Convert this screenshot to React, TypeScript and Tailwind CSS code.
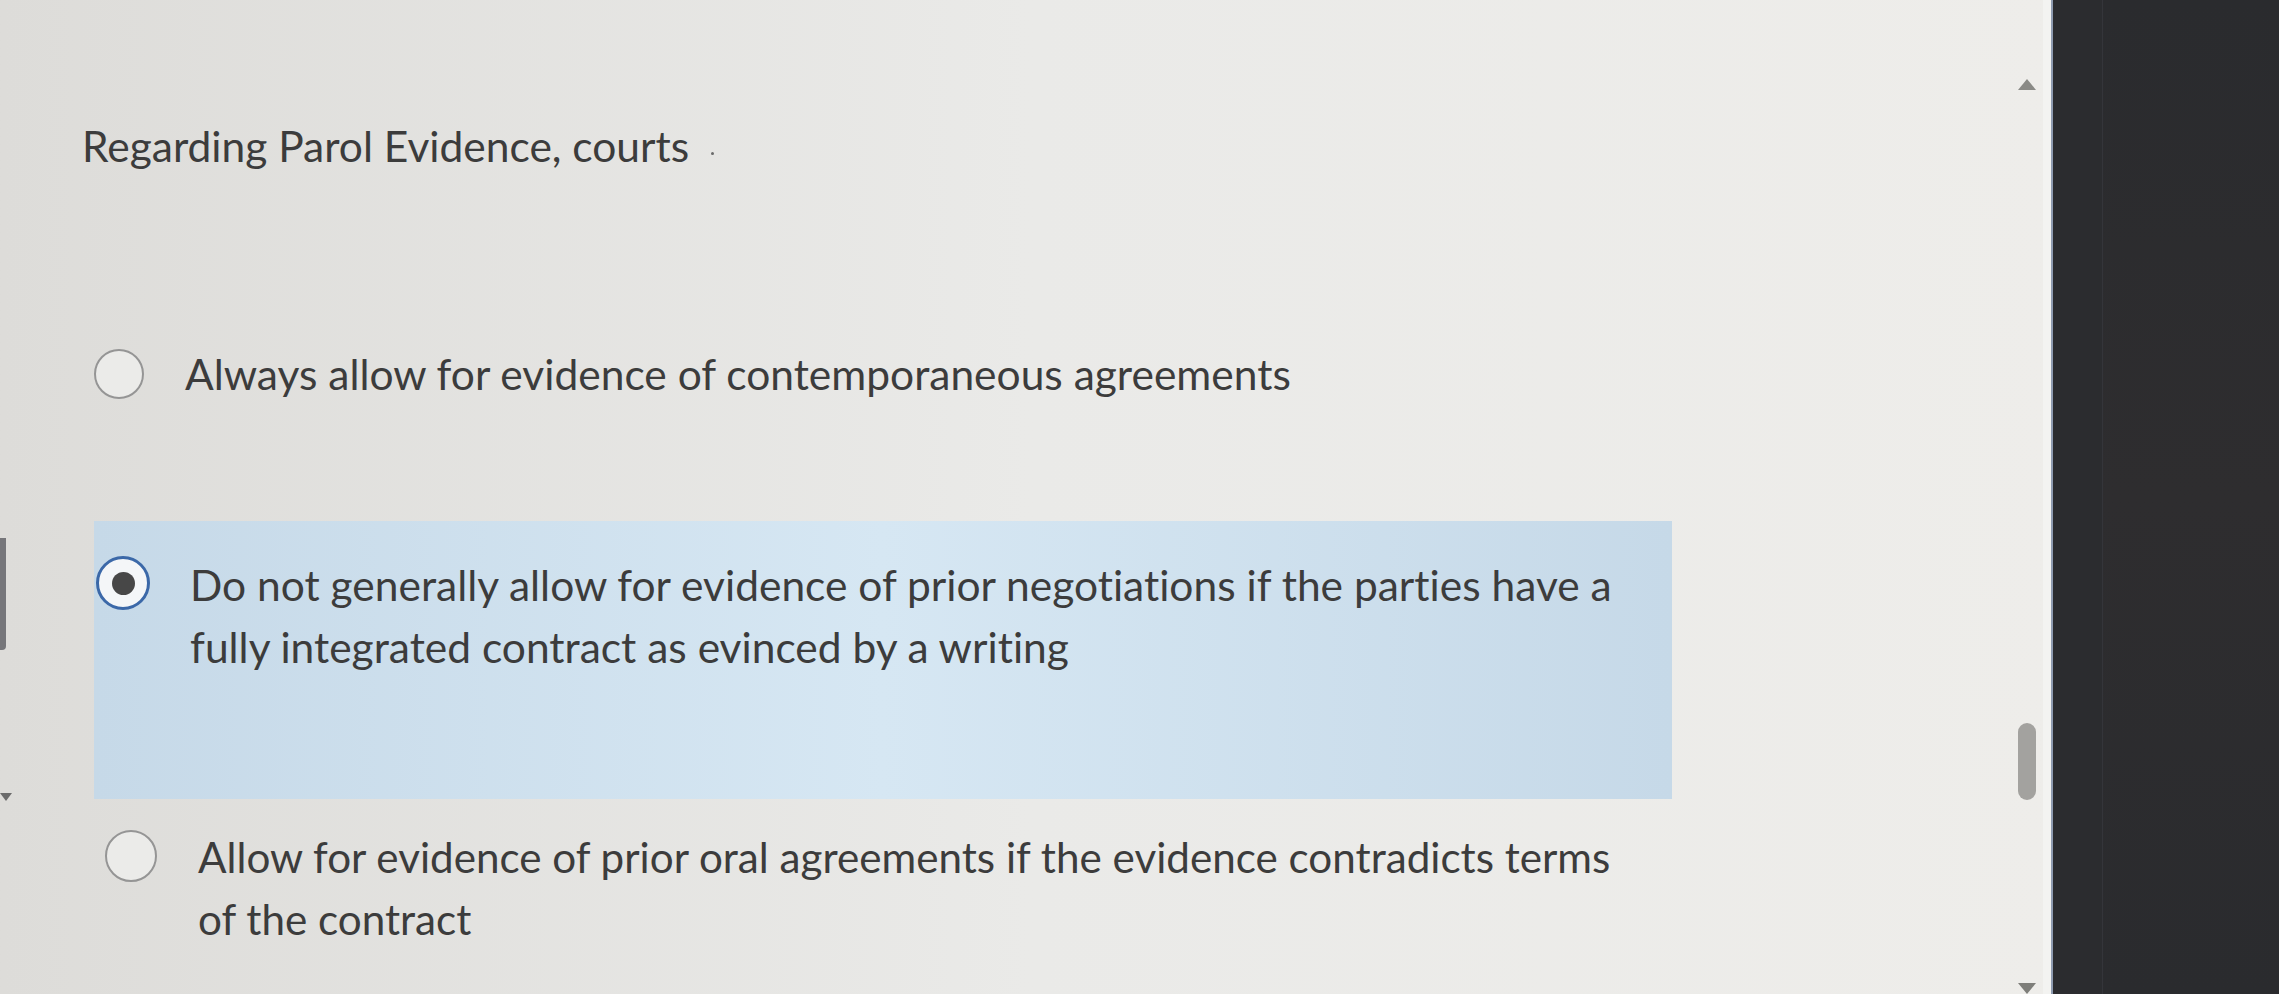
import React from "react";

const font = {
  fontFamily: "Lato, 'Open Sans', 'Liberation Sans', sans-serif",
  fontVariantLigatures: "none" as const,
};

function Radio({ size, selected }: { size: number; selected?: boolean }) {
  if (selected) {
    return (
      <div
        className="shrink-0 rounded-full border-[3px] border-[#3b68a8] bg-[#f4f6f8] flex items-center justify-center"
        style={{ width: size, height: size }}
      >
        <div className="w-[23px] h-[23px] rounded-full bg-[#474747]" />
      </div>
    );
  }
  return (
    <div
      className="shrink-0 rounded-full border-[2px] border-[#959595] bg-[#ebebe9]"
      style={{ width: size, height: size }}
    />
  );
}

export default function App() {
  return (
    <div className="w-[2279px] h-[994px] overflow-hidden flex" style={font}>
      {/* main content */}
      <div className="relative flex-1 flex bg-linear-to-r from-[#dddcd9] via-[#eaeae8] to-[#eeedea]">
        <div className="absolute left-0 top-[538px] w-[6px] h-[112px] rounded-br-[4px] bg-[#76767a]" />
        <div className="absolute left-0 top-[793px] w-0 h-0 border-l-[6px] border-r-[6px] border-t-[8px] border-l-transparent border-r-transparent border-t-[#6b6b6b]" />

        <div className="flex-1 flex flex-col pt-[121px] text-[#3c3c3c]">
          <div className="pl-[82px] text-[42.5px] leading-[50px] flex items-center">
            <span>Regarding Parol Evidence, courts</span>
            <span className="ml-[22px] mt-[14px] w-[3px] h-[3px] rounded-full bg-[#6a6a6a]" />
          </div>

          <div className="ml-[94px] w-[1578px] flex flex-col mt-[172px]">
            {/* option 1 */}
            <div className="flex items-start">
              <div className="mt-[6px]">
                <Radio size={50} />
              </div>
              <div className="ml-[41px] text-[42.5px] leading-[62px]">
                Always allow for evidence of contemporaneous agreements
              </div>
            </div>

            {/* option 2 selected */}
            <div className="mt-[116px] flex items-start pl-[2px] pt-[33px] pb-[121px] bg-linear-to-r from-[#c6d9e8] via-[#d6e7f3] to-[#c6d9e8]">
              <div className="mt-[2px]">
                <Radio size={54} selected />
              </div>
              <div className="ml-[40px] w-[1470px] text-[42.5px] leading-[62px]">
                Do not generally allow for evidence of prior negotiations if the parties have a fully integrated contract as evinced by a writing
              </div>
            </div>

            {/* option 3 */}
            <div className="mt-[27px] flex items-start pl-[11px]">
              <div className="mt-[4px]">
                <Radio size={52} />
              </div>
              <div className="ml-[41px] w-[1445px] text-[42.2px] leading-[62px]">
                Allow for evidence of prior oral agreements if the evidence contradicts terms of the contract
              </div>
            </div>
          </div>
        </div>

        {/* scrollbar track */}
        <div className="w-[43px] flex flex-col pl-[18px] pt-[79px]">
          <div className="w-0 h-0 border-l-[9px] border-r-[9px] border-b-[11px] border-l-transparent border-r-transparent border-b-[#8a8a86]" />
          <div className="mt-[633px] w-[18px] h-[79px] rounded-full bg-[#a3a29f]" />
          <div className="mt-[183px] w-0 h-0 border-l-[9px] border-r-[9px] border-t-[11px] border-l-transparent border-r-transparent border-t-[#7e7e7a]" />
        </div>
        <div className="w-[8px] bg-[#f3f3f1]" />
      </div>

      {/* dark bezel */}
      <div className="w-[228px] flex bg-[#2b2c2f] border-l-[2px] border-[#8e9bb0]">
        <div className="w-[50px] border-r border-[#34353a]" />
        <div className="flex-1 bg-linear-to-b from-[#2a2b2e] via-[#2e2d2f] to-[#2a2b2e]" />
      </div>
    </div>
  );
}
